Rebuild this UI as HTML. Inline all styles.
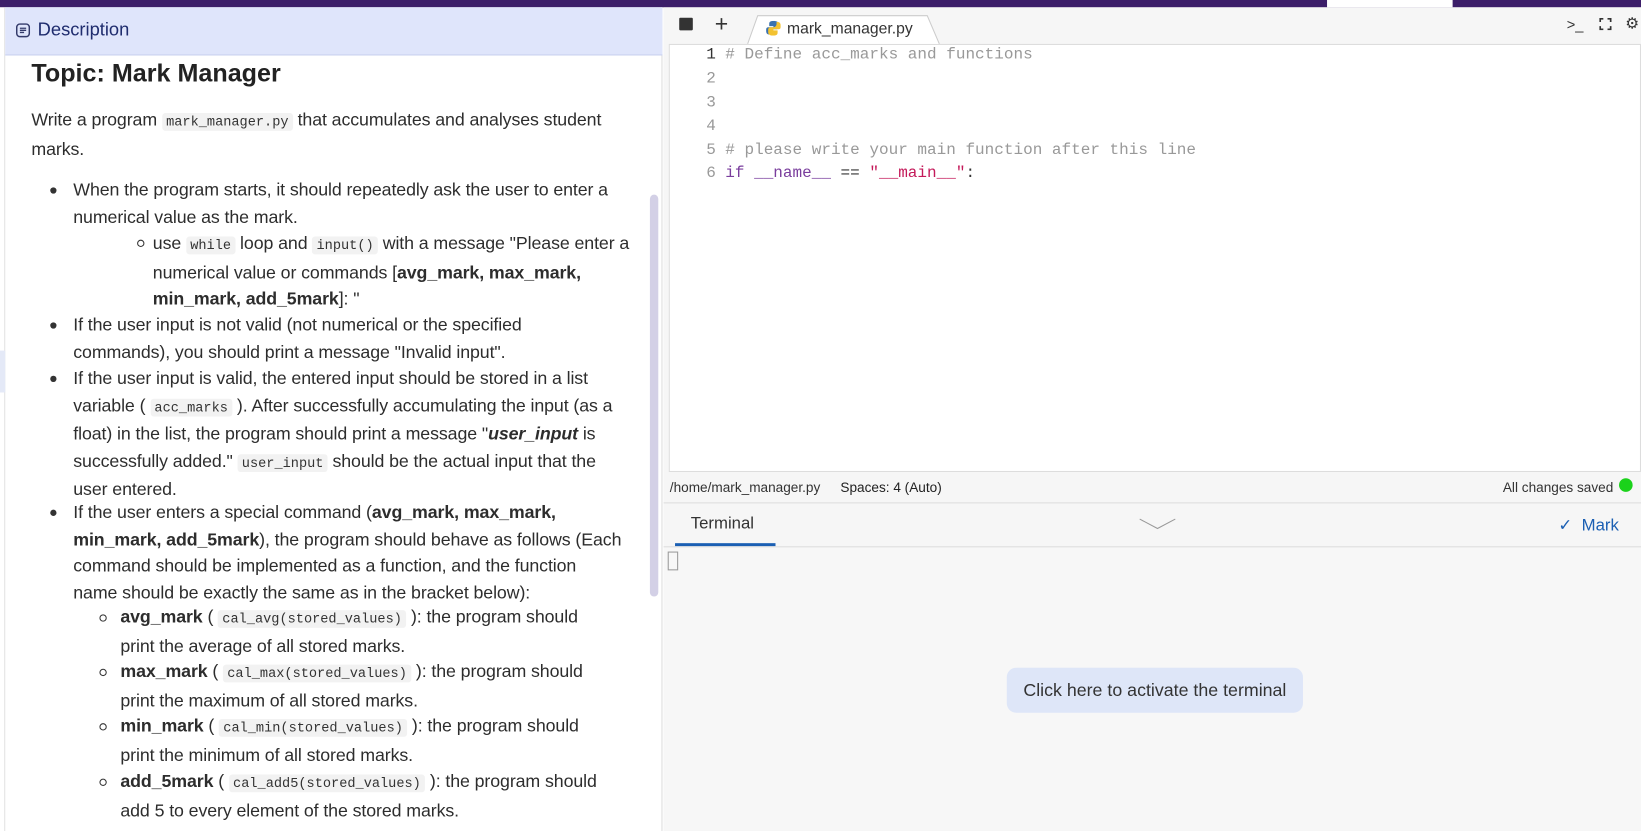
<!DOCTYPE html>
<html><head><meta charset="utf-8"><style>
*{box-sizing:border-box;margin:0;padding:0}
html,body{width:1641px;height:831px;overflow:hidden;background:#fff}
body{font-family:"Liberation Sans",sans-serif;color:#333;position:relative}
#w{position:absolute;left:0;top:0;width:1568px;height:794px;transform:scale(1.04656);transform-origin:0 0}
.abs{position:absolute}
.p{position:absolute;left:30px;font-size:17px;line-height:25.6px;white-space:nowrap;color:#2d2d2d;letter-spacing:-0.1px}
code{font-family:"Liberation Mono",monospace;font-size:13px;background:#f2f2f2;padding:1px 4px;border-radius:3px;color:#333;letter-spacing:0}
.dot{position:absolute;width:6px;height:6px;border-radius:50%;background:#333}
.circ{position:absolute;width:7px;height:7px;border-radius:50%;border:1.3px solid #333}
.mono{font-family:"Liberation Mono",monospace;font-size:15.3px;white-space:pre}
.ln{position:absolute;width:40px;text-align:right;left:644px;color:#999}
.cl{position:absolute;left:693px;color:#999}
</style></head><body><div id="w">
<div class="abs" style="left:0;top:0;width:1568px;height:7px;background:#3c1e69"></div>
<div class="abs" style="left:1268px;top:0;width:120px;height:7px;background:#fff"></div>

<div class="abs" style="left:0;top:7px;width:633px;height:787px;background:#fff;border-right:1px solid #ddd"></div>
<div class="abs" style="left:4px;top:7px;width:1px;height:787px;background:#e2e2e2"></div>
<div class="abs" style="left:0;top:335px;width:5px;height:40px;background:#e4e9f7"></div>
<div class="abs" style="left:5px;top:7px;width:628px;height:46px;background:#dfe5fb;border-bottom:1px solid #c8d0ee"></div>
<svg class="abs" style="left:15px;top:22px" width="14" height="14" viewBox="0 0 14 14"><rect x="1" y="1" width="12" height="12" rx="3" fill="none" stroke="#333a6a" stroke-width="1.4"/><path d="M4 5h6M4 7h6M4 9h4" stroke="#333a6a" stroke-width="1.3"/></svg>
<div class="abs" style="left:36px;top:18px;font-size:17.5px;color:#1f2c6e">Description</div>
<div class="abs" style="left:30px;top:57px;font-size:24px;font-weight:bold;color:#222">Topic: Mark Manager</div>

<div class="p" style="top:102px">Write a program <code>mark_manager.py</code> that accumulates and analyses student<br>marks.</div>
<div class="dot" style="left:48px;top:179px"></div>
<div class="p" style="left:70px;top:169px">When the program starts, it should repeatedly ask the user to enter a<br>numerical value as the mark.</div>
<div class="circ" style="left:131px;top:229px"></div>
<div class="p" style="left:146px;top:220px">use <code>while</code> loop and <code>input()</code> with a message "Please enter a<br>numerical value or commands [<b>avg_mark, max_mark,</b><br><b>min_mark, add_5mark</b>]: "</div>
<div class="dot" style="left:48px;top:308px"></div>
<div class="p" style="left:70px;top:298px">If the user input is not valid (not numerical or the specified<br>commands), you should print a message "Invalid input".</div>
<div class="dot" style="left:48px;top:359px"></div>
<div class="p" style="left:70px;top:349px">If the user input is valid, the entered input should be stored in a list<br>variable ( <code>acc_marks</code> ). After successfully accumulating the input (as a<br>float) in the list, the program should print a message "<b><i>user_input</i></b> is<br>successfully added." <code>user_input</code> should be the actual input that the<br>user entered.</div>
<div class="dot" style="left:48px;top:487px"></div>
<div class="p" style="left:70px;top:477px">If the user enters a special command (<b>avg_mark, max_mark,</b><br><b>min_mark, add_5mark</b>), the program should behave as follows (Each<br>command should be implemented as a function, and the function<br>name should be exactly the same as in the bracket below):</div>
<div class="circ" style="left:95px;top:587px"></div>
<div class="p" style="left:115px;top:577px"><b>avg_mark</b> ( <code>cal_avg(stored_values)</code> ): the program should<br>print the average of all stored marks.</div>
<div class="circ" style="left:95px;top:639px"></div>
<div class="p" style="left:115px;top:629px"><b>max_mark</b> ( <code>cal_max(stored_values)</code> ): the program should<br>print the maximum of all stored marks.</div>
<div class="circ" style="left:95px;top:691px"></div>
<div class="p" style="left:115px;top:681px"><b>min_mark</b> ( <code>cal_min(stored_values)</code> ): the program should<br>print the minimum of all stored marks.</div>
<div class="circ" style="left:95px;top:744px"></div>
<div class="p" style="left:115px;top:734px"><b>add_5mark</b> ( <code>cal_add5(stored_values)</code> ): the program should<br>add 5 to every element of the stored marks.</div>
<div class="abs" style="left:621px;top:186px;width:8px;height:384px;background:#d3d0e6;border-radius:4px"></div>

<div class="abs" style="left:634px;top:7px;width:934px;height:787px;background:#f6f6f6"></div>
<div class="abs" style="left:649px;top:17px;width:13px;height:12px;background:#333;border-radius:1px"></div>
<div class="abs" style="left:683px;top:10px;font-size:22px;color:#333">+</div>
<svg class="abs" style="left:714px;top:13px" width="184" height="30"><path d="M0 30 L10 2 H172 L184 30" fill="#fff" stroke="#ccc"/></svg>
<svg class="abs" style="left:732px;top:20px" width="14" height="14" viewBox="0 0 14 14"><path d="M7 0C3 0 3 2 3 3v2h4v1H2C0 6 0 8 0 9s0 4 3 4h1v-2c0-1 1-3 3-3h3c1 0 2-1 2-2V3C12 1 10 0 7 0z" fill="#3a72b0"/><path d="M7 14c4 0 4-2 4-3V9H7V8h5c2 0 2-2 2-3s0-4-3-4h-1v2c0 1-1 3-3 3H4C3 6 2 7 2 8v3c0 2 2 3 5 3z" fill="#f3c230"/></svg>
<div class="abs" style="left:752px;top:19px;font-size:15px;color:#333">mark_manager.py</div>
<div class="abs" style="left:1497px;top:15px;font-size:14px;color:#333">&gt;_</div>
<svg class="abs" style="left:1528px;top:17px" width="12" height="12"><path d="M1 4V1H4M8 1H11V4M11 8V11H8M4 11H1V8" fill="none" stroke="#333" stroke-width="1.6"/></svg>
<div class="abs" style="left:1553px;top:13px;font-size:15px;color:#333">⚙</div>
<div class="abs" style="left:639px;top:42px;width:929px;height:409px;background:#fff;border:1px solid #ddd"></div>
<div class="mono ln" style="top:43px;color:#333">1</div>
<div class="mono cl" style="top:43px"># Define acc_marks and functions</div>
<div class="mono ln" style="top:66px">2</div>
<div class="mono ln" style="top:89px">3</div>
<div class="mono ln" style="top:111px">4</div>
<div class="mono ln" style="top:134px">5</div>
<div class="mono cl" style="top:134px"># please write your main function after this line</div>
<div class="mono ln" style="top:156px">6</div>
<div class="mono cl" style="top:156px;color:#333"><span style="color:#7a3e9d">if</span> <span style="color:#7a3e9d">__name__</span> == <span style="color:#c41a5a">"__main__"</span>:</div>
<div class="abs" style="left:640px;top:458px;font-size:13px;color:#333">/home/mark_manager.py</div>
<div class="abs" style="left:803px;top:458px;font-size:13px;color:#222">Spaces: 4 (Auto)</div>
<div class="abs" style="left:1436px;top:458px;font-size:13px;color:#333">All changes saved</div>
<div class="abs" style="left:1547px;top:457px;width:13px;height:13px;border-radius:50%;background:#1bd21b"></div>
<div class="abs" style="left:634px;top:480px;width:934px;height:1px;background:#ddd"></div>
<div class="abs" style="left:660px;top:492px;font-size:16px;color:#333">Terminal</div>
<div class="abs" style="left:645px;top:519px;width:96px;height:3px;background:#1b5fb3"></div>
<svg class="abs" style="left:1088px;top:495px" width="36" height="12"><path d="M1 1L18 10L35 1" fill="none" stroke="#999" stroke-width="1"/></svg>
<div class="abs" style="left:1489px;top:492px;font-size:16px;color:#1b5fb3">✓&nbsp; Mark</div>
<div class="abs" style="left:634px;top:522px;width:934px;height:272px;background:#f7f7f7;border-top:1px solid #ddd"></div>
<div class="abs" style="left:638px;top:527px;width:10px;height:18px;border:1px solid #999"></div>
<div class="abs" style="left:962px;top:638px;width:283px;height:43px;background:#dee6f8;border-radius:9px;font-size:17px;color:#333;text-align:center;line-height:43px;white-space:nowrap">Click here to activate the terminal</div>
</div></body></html>
